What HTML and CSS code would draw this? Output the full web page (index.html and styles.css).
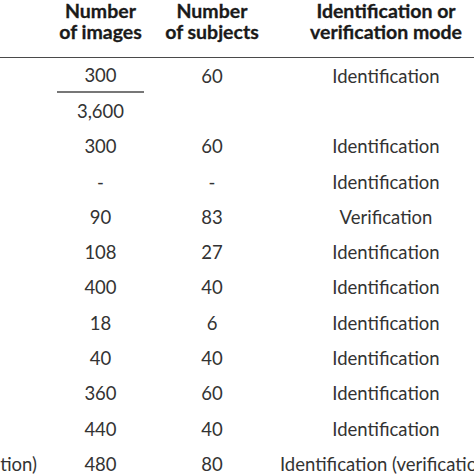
FILE: index.html
```html
<!DOCTYPE html>
<html>
<head>
<meta charset="utf-8">
<link rel="stylesheet" href="styles.css">
</head>
<body>
<div class="table">
  <div class="row head">
    <div class="c0"></div>
    <div class="c1">Number<br>of images</div>
    <div class="c2">Number<br>of subjects</div>
    <div class="c3">Identification or<br>verification mode</div>
  </div>
  <div class="row"><div class="c0"></div><div class="c1 ruled">300</div><div class="c2">60</div><div class="c3">Identification</div></div>
  <div class="row"><div class="c0"></div><div class="c1">3,600</div><div class="c2"></div><div class="c3"></div></div>
  <div class="row"><div class="c0"></div><div class="c1">300</div><div class="c2">60</div><div class="c3">Identification</div></div>
  <div class="row"><div class="c0"></div><div class="c1">-</div><div class="c2">-</div><div class="c3">Identification</div></div>
  <div class="row"><div class="c0"></div><div class="c1">90</div><div class="c2">83</div><div class="c3">Verification</div></div>
  <div class="row"><div class="c0"></div><div class="c1">108</div><div class="c2">27</div><div class="c3">Identification</div></div>
  <div class="row"><div class="c0"></div><div class="c1">400</div><div class="c2">40</div><div class="c3">Identification</div></div>
  <div class="row"><div class="c0"></div><div class="c1">18</div><div class="c2">6</div><div class="c3">Identification</div></div>
  <div class="row"><div class="c0"></div><div class="c1">40</div><div class="c2">40</div><div class="c3">Identification</div></div>
  <div class="row"><div class="c0"></div><div class="c1">360</div><div class="c2">60</div><div class="c3">Identification</div></div>
  <div class="row"><div class="c0"></div><div class="c1">440</div><div class="c2">40</div><div class="c3">Identification</div></div>
  <div class="row"><div class="c0"><span>Identification and verification)</span></div><div class="c1">480</div><div class="c2">80</div><div class="c3">Identification (verification)</div></div>
</div>
</body>
</html>
```
FILE: styles.css
```css
html, body {
  margin: 0;
  padding: 0;
  background: #ffffff;
  overflow: hidden;
  width: 474px;
  height: 474px;
}
.table {
  font-family: Lato, "Open Sans", sans-serif;
  color: #333333;
  font-size: 18.5px;
  font-weight: 400;
  width: 492px;
}
.row {
  display: grid;
  grid-template-columns: 57px 87px 136px 212px;
  height: 35.3px;
  align-items: center;
}
.row > div {
  text-align: center;
  white-space: nowrap;
  height: 100%;
  display: flex;
  align-items: center;
  justify-content: center;
}
.row > .c0 {
  justify-content: flex-end;
  padding-right: 20px;
}
.row.head {
  height: 57px;
  border-bottom: 1.5px solid #4a4a4a;
  align-items: start;
}
.row.head > div {
  font-weight: 700;
  font-size: 19.5px;
  line-height: 21px;
  color: #1a1a1a;
  align-items: flex-start;
  padding-top: 0;
  -webkit-text-stroke: 0.3px #1a1a1a;
}
.row > .ruled {
  border-bottom: 2px solid #777777;
  box-sizing: border-box;
}
```
